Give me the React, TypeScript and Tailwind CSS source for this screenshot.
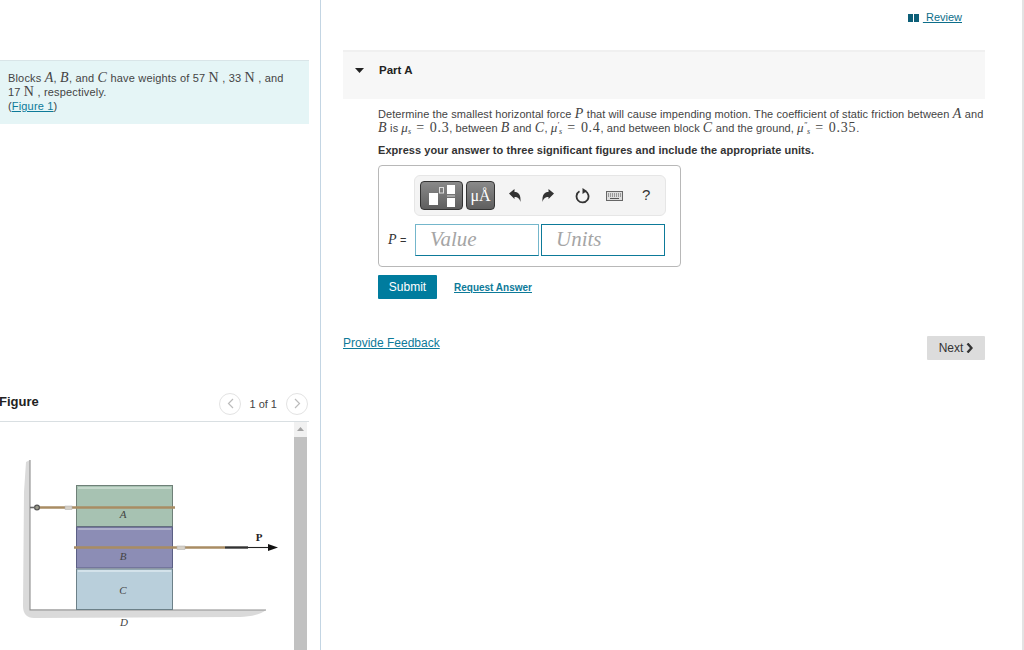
import React from "react";

const M = ({ children, i = false }: { children: React.ReactNode; i?: boolean }) => (
  <span className={`font-['Liberation_Serif',serif] text-[14px] leading-[8px] tracking-[0.03em] ${i ? "italic" : ""}`}>{children}</span>
);

const Eq = ({ v }: { v: string }) => (
  <span className="font-['Liberation_Serif',serif] text-[14px] leading-[8px] tracking-[0.05em]">
    <span className="mx-[5px]">=</span>
    {v}
  </span>
);

const Mu = ({ mark = "" }: { mark?: string }) => (
  <span className="font-['Liberation_Serif',serif] text-[13px] italic leading-[8px]">
    μ<span className="relative top-[-4px] text-[8px] leading-[6px]">{mark}</span>
    <span className="relative top-[2px] text-[8px] leading-[6px]">s</span>
  </span>
);

function Figure() {
  return (
    <svg width="294" height="229" viewBox="0 0 294 229" className="block shrink-0">
      {/* wall and floor shade */}
      <path d="M26 40 L30 38 L30 187 L266 188 C262 192 250 195 240 195 L34 196 C27 196 23 192 23 184 L24 70 Z" fill="#dadada" />
      <path d="M30 38 V188 H266" fill="none" stroke="#8f8f8f" strokeWidth="1.1" />
      {/* blocks */}
      <rect x="76.5" y="63.5" width="96" height="41" fill="#a7c2b2" stroke="#6f8078" />
      <rect x="78" y="65" width="93" height="2" fill="#c5d8cc" />
      <rect x="76.5" y="105" width="96" height="41" fill="#8c8db5" stroke="#5b5f84" />
      <rect x="78" y="106" width="93" height="2" fill="#aeb0cb" />
      <rect x="76.5" y="147" width="96" height="40.5" fill="#b9cfdb" stroke="#6c8088" />
      <rect x="78" y="148" width="93" height="2" fill="#d3e2ea" />
      {/* top rope */}
      <path d="M36 85.5 H175" stroke="#a98c63" strokeWidth="2.6" />
      <rect x="65" y="84" width="7" height="3.5" fill="#d6d1c8" stroke="#aaa" strokeWidth="0.5" />
      <circle cx="37" cy="85.5" r="2.4" fill="#9a9a8a" stroke="#555" strokeWidth="1.2" />
      <path d="M30 85.5 H35" stroke="#666" strokeWidth="1.6" />
      {/* lower rope */}
      <path d="M74 125.5 H225" stroke="#a98c63" strokeWidth="2.6" />
      <rect x="177" y="124" width="8" height="3.5" fill="#d6d1c8" stroke="#aaa" strokeWidth="0.5" />
      <path d="M225 125.5 H248" stroke="#333" strokeWidth="2.4" />
      <path d="M248 125.5 H270" stroke="#222" strokeWidth="1.1" />
      <path d="M268 122 L278 125.5 L268 129 Z" fill="#111" />
      <g fontFamily="'Liberation Serif', serif" fontSize="11" fill="#444" textAnchor="middle">
        <text x="123" y="96" fontStyle="italic">A</text>
        <text x="123" y="138" fontStyle="italic">B</text>
        <text x="123" y="172" fontStyle="italic">C</text>
        <text x="124" y="204" fontStyle="italic">D</text>
        <text x="259" y="119" fontWeight="700" fill="#222">P</text>
      </g>
    </svg>
  );
}

function BlockIcon() {
  return (
    <svg width="28" height="22" viewBox="0 0 28 22">
      <rect x="1" y="8" width="9" height="12" fill="#fff" />
      <rect x="11.5" y="2.5" width="4" height="5.5" fill="none" stroke="#ddd" strokeWidth="1" />
      <rect x="19" y="0" width="8" height="9" fill="#fff" />
      <rect x="19" y="10" width="8" height="2" fill="#a5a5a5" />
      <rect x="19" y="13" width="8" height="9" fill="#fff" />
    </svg>
  );
}

function Undo({ flip = false }: { flip?: boolean }) {
  return (
    <svg width="12" height="13" viewBox="0 0 12 13" className={flip ? "-scale-x-100" : ""}>
      <path d="M0 4.5 L5.5 0 V3 C9.5 3 12 5.5 11.5 13 C10.5 9.5 9 8 5.5 8 V10 Z" fill="#333" />
    </svg>
  );
}

export default function App() {
  return (
    <div className="flex h-[650px] w-[1024px] overflow-hidden bg-white font-['Liberation_Sans',Arial,sans-serif] text-[#333]">
      {/* left column */}
      <div className="flex h-full w-[321px] shrink-0 flex-col border-r border-r-[#c3d5e3]">
        <div className="mt-[60px] h-[64px] w-[309px] border-t border-[#d9e5e8] bg-[#e5f5f6] pl-2 pt-[10px] text-[11px] leading-[14px] tracking-[0.015em] text-[#444]">
          <p>
            Blocks <M i>A</M>, <M i>B</M>, and <M i>C</M> have weights of 57 <M>N</M> , 33 <M>N</M> , and
            <br />
            17 <M>N</M> , respectively.
            <br />
            (<a className="text-[#0d7a99] underline">Figure 1</a>)
          </p>
        </div>
        <div className="mt-[267px] flex h-[31px] w-[309px] items-start justify-between border-b border-[#d9dfe2]">
          <h2 className="ml-[-1px] mt-[3px] text-[13px] font-bold leading-[15px] text-[#222]">Figure</h2>
          <div className="mt-[2px] flex items-center">
            <span className="flex size-[22px] items-center justify-center rounded-full border border-[#e3e3e3] text-[#bbb]">
              <svg width="7" height="11" viewBox="0 0 7 11"><path d="M6 1 L1.5 5.5 L6 10" fill="none" stroke="#bbb" strokeWidth="1.2" /></svg>
            </span>
            <span className="ml-[8px] mr-[9px] text-[11px] text-[#444]">1 of 1</span>
            <span className="mr-[1px] flex size-[22px] items-center justify-center rounded-full border border-[#e3e3e3]">
              <svg width="7" height="11" viewBox="0 0 7 11"><path d="M1 1 L5.5 5.5 L1 10" fill="none" stroke="#bbb" strokeWidth="1.2" /></svg>
            </span>
          </div>
        </div>
        <div className="flex h-[229px] w-[309px] overflow-hidden">
          <Figure />
          <div className="flex w-[13px] shrink-0 flex-col">
            <div className="flex h-[15px] items-center justify-center bg-[#f1f1f1]">
              <svg width="7" height="4" viewBox="0 0 7 4"><path d="M3.5 0 L7 4 H0 Z" fill="#a3a3a3" /></svg>
            </div>
            <div className="flex-1 bg-[#c1c1c1]" />
          </div>
        </div>
      </div>

      {/* right column */}
      <div className="flex h-full min-w-0 flex-1 flex-col border-r-2 border-r-[#e3e3e3] pl-[22px] pr-[37px]">
        <div className="flex h-[50px] justify-end pr-[23px] pt-[11px]">
          <a className="flex h-[13px] items-center text-[11px] text-[#0d6e8a] underline">
            <svg width="11" height="8" viewBox="0 0 11 8" className="mr-[4px]">
              <path d="M0 0 H5 V8 H0 Z M6 0 H11 V8 H6 Z" fill="#0d5f78" />
            </svg>
            &nbsp;Review
          </a>
        </div>
        <div className="flex h-[49px] w-[642px] items-start border-t-2 border-[#f0f0f0] bg-[#f7f7f7]">
          <svg width="9" height="5" viewBox="0 0 9 5" className="ml-[12px] mt-[16px]"><path d="M0 0 H9 L4.5 5 Z" fill="#222" /></svg>
          <span className="ml-[15px] mt-[11px] text-[11.5px] font-bold leading-[14px] text-[#222]">Part A</span>
        </div>
        <div className="w-[642px] pl-[35px]">
          <p className="mt-[9px] whitespace-nowrap text-[11px] leading-[13.5px] tracking-[0.0065em] text-[#444]">
            Determine the smallest horizontal force <M i>P</M> that will cause impending motion. The coefficient of static friction between <M i>A</M> and
            <br />
            <M i>B</M> is <Mu /><Eq v="0.3" />, between <M i>B</M> and <M i>C</M>, <Mu mark="′" /><Eq v="0.4" />, and between block <M i>C</M> and the ground, <Mu mark="″" /><Eq v="0.35" />.
          </p>
          <p className="mt-[8px] whitespace-nowrap text-[11px] font-bold leading-[14px] tracking-[0.005em] text-[#333]">
            Express your answer to three significant figures and include the appropriate units.
          </p>

          <div className="mt-[8px] flex h-[102px] w-[303px] flex-col rounded-[4px] border border-[#b8b8b8] pl-[35px] pt-[9px]">
            <div className="flex h-[41px] w-[252px] items-center rounded-[6px] border border-[#e6e6e6] bg-[#f4f4f4] pl-[5px]">
              <span className="flex h-[29px] w-[43px] items-center justify-center rounded-[4px] border border-[#333] bg-gradient-to-b from-[#8a8a8a] to-[#5f5f5f]">
                <BlockIcon />
              </span>
              <span className="ml-[3px] flex h-[29px] w-[29px] items-center justify-center rounded-[4px] border border-[#333] bg-gradient-to-b from-[#8a8a8a] to-[#5f5f5f] font-['Liberation_Serif',serif] text-[16px] text-white">
                μÅ
              </span>
              <span className="ml-[14px] flex"><Undo /></span>
              <span className="ml-[21px] flex"><Undo flip /></span>
              <svg width="15" height="16" viewBox="0 0 15 16" className="ml-[21px]">
                <path d="M4.5 3.3 A6 6 0 1 0 10 3" fill="none" stroke="#333" strokeWidth="1.8" />
                <path d="M7.5 0 L7.5 6 L12 3 Z" fill="#333" />
              </svg>
              <svg width="17" height="10" viewBox="0 0 17 10" className="ml-[16px]">
                <rect x="0.5" y="0.5" width="16" height="9" fill="#ddd" stroke="#666" />
                <path d="M2 3 H15 M2 5 H15" stroke="#555" strokeWidth="1" strokeDasharray="1 1" />
                <path d="M4 7.5 H13" stroke="#555" strokeWidth="1" />
              </svg>
              <span className="ml-[19px] text-[15px] text-[#333]">?</span>
            </div>
            <div className="ml-[-26px] mt-[8px] flex items-center">
              <span className="w-[26px] whitespace-nowrap text-[11px] text-[#333]">
                <M i>P</M> =
              </span>
              <div className="ml-[1px] flex h-[32px] w-[124px] items-center border border-[#74b6cb] border-b-[#0d7a99] pl-[14px] font-['Liberation_Serif',serif] text-[21px] italic text-[#a5a5a5]">
                Value
              </div>
              <div className="ml-[2px] flex h-[32px] w-[124px] items-center border border-[#0d7a99] pl-[14px] font-['Liberation_Serif',serif] text-[21px] italic text-[#a5a5a5]">
                Units
              </div>
            </div>
          </div>

          <div className="mt-[8px] flex items-center">
            <button className="h-[24px] w-[59px] rounded-[1px] bg-[#007c9e] text-[12px] text-white">Submit</button>
            <a className="ml-[17px] text-[10px] font-bold text-[#0d7a99] underline">Request Answer</a>
          </div>
        </div>

        <div className="mt-[37px] flex w-[642px] items-start justify-between">
          <a className="text-[12px] leading-[14px] text-[#0d7a99] underline">Provide Feedback</a>
          <button className="flex h-[24px] w-[58px] items-center justify-center gap-[3px] rounded-[1px] bg-[#dcdcdc] text-[12px] text-[#333]">
            Next
            <svg width="7" height="10" viewBox="0 0 7 10"><path d="M1.5 0.5 L5.5 5 L1.5 9.5" fill="none" stroke="#333" strokeWidth="2.4" /></svg>
          </button>
        </div>
      </div>
    </div>
  );
}
